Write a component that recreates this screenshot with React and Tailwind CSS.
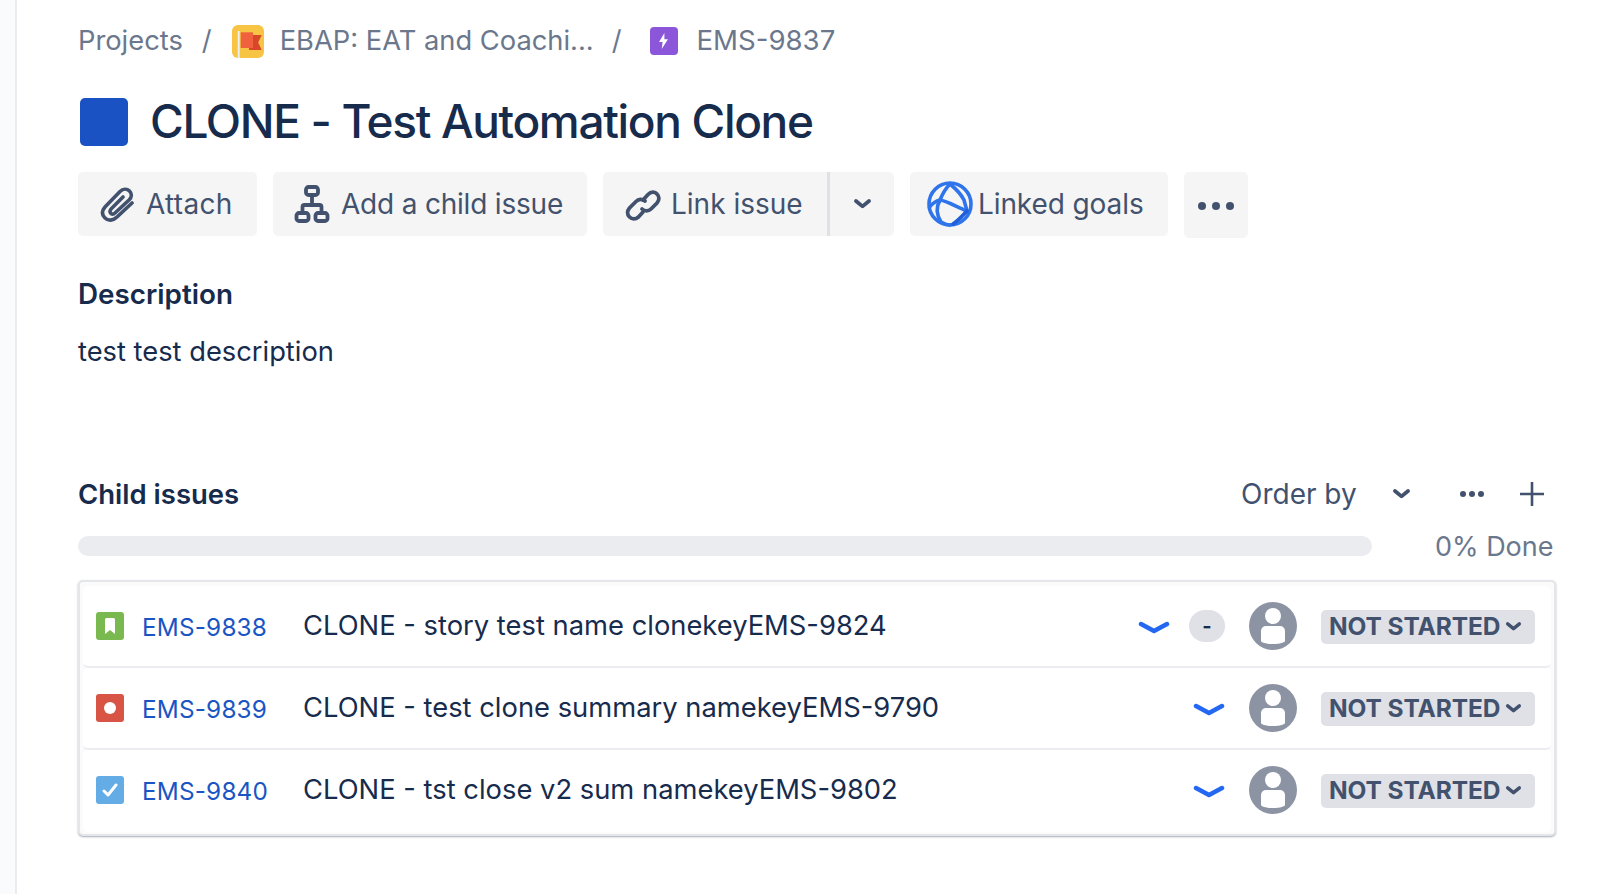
import React from 'react'

const rows = [
  { key: 'EMS-9838', type: 'story', summary: 'CLONE - story test name clonekeyEMS-9824', points: true },
  { key: 'EMS-9839', type: 'bug', summary: 'CLONE - test clone summary namekeyEMS-9790' },
  { key: 'EMS-9840', type: 'task', summary: 'CLONE - tst close v2 sum namekeyEMS-9802' },
]

function Chevron({ className }) {
  return (
    <svg viewBox="0 0 16 10" className={className} fill="none" stroke="currentColor" strokeWidth="3.2" strokeLinecap="round" strokeLinejoin="round">
      <path d="M2.500 2.500L8 7l5.500-4.500" />
    </svg>
  )
}

function PriorityLow() {
  return (
    <svg viewBox="0 0 32 14" className="mt-[3px] h-[14px] w-[32px] shrink-0" fill="none" stroke="#2468f2" strokeWidth="4.500" strokeLinecap="round" strokeLinejoin="round">
      <path d="M3 3l13 7 13-7" />
    </svg>
  )
}

function PaperclipIcon() {
  return (
    <svg viewBox="0 0 36 40" className="h-[40px] w-[36px] text-[#42526e]" fill="none" stroke="currentColor" strokeWidth="3.600" strokeLinecap="round">
      <path d="M34 19L19 33C15 37 10 37 7 34C4 31 3.500 27 7 23L22 7.500C25 4.500 29 4.500 31.500 7C34 9.500 34 13 31 16L17 29C15.500 30.500 13.500 30.500 12.500 29C11.500 27.500 12 26 13.500 24.500L25 13" />
    </svg>
  )
}

function HierarchyIcon() {
  return (
    <svg viewBox="0 0 36 40" className="h-[40px] w-[36px] text-[#42526e]" fill="none" stroke="currentColor" strokeWidth="3.800">
      <rect x="12" y="3" width="12" height="8" rx="2.500" />
      <rect x="2.500" y="29" width="12" height="8" rx="2.500" />
      <rect x="21.500" y="29" width="12" height="8" rx="2.500" />
      <path d="M18 11v10M8.500 29v-6a2 2 0 0 1 2-2h15a2 2 0 0 1 2 2v6" />
    </svg>
  )
}

function LinkIcon() {
  return (
    <svg viewBox="0 0 36 36" className="h-[36px] w-[36px] overflow-visible text-[#42526e]" fill="none" stroke="currentColor" strokeWidth="3.800" strokeLinecap="round">
      <path d="M19 14L24 8.500C27 5.500 31 5.500 33 8C35.500 10.500 35.500 14 33 17L27 23C24.500 25.500 20.500 25.500 18 23" />
      <path d="M21 15C18 12.500 14.500 13 12 15.500L5.500 22C3 25 3 28.500 5.500 31C8 33.500 11.500 33.500 14.500 31L19 26" />
    </svg>
  )
}

function GlobeIcon() {
  return (
    <svg viewBox="0 0 46 46" className="h-[46px] w-[46px]" fill="none" stroke="#2f74ea" strokeWidth="3.600" strokeLinecap="round">
      <circle cx="23" cy="23" r="21" />
      <path d="M23 3C18 8 15 14 13 19C9 20 5 23 2.500 26" />
      <path d="M23 3C29 8 34 13 37 19C38 23 39 26 40 30" />
      <path d="M13 19C20 20 30 26 40 30" />
      <path d="M13 19C9 26 9 33 14 41C17 43 20 44 23 44" />
      <path d="M40 30C36 34 32 39 26 43" stroke="#1f5fd8" />
    </svg>
  )
}

function TypeIcon({ type }) {
  if (type === 'story') {
    return (
      <span className="flex h-[28px] w-[28px] shrink-0 items-center justify-center rounded-[3px] bg-[#7ab94f]">
        <svg viewBox="0 0 12 16" className="h-[16px] w-[12px]" fill="white">
          <path d="M1 1.500A1.500 1.500 0 0 1 2.500 0h7A1.500 1.500 0 0 1 11 1.500V16l-5-4-5 4z" />
        </svg>
      </span>
    )
  }
  if (type === 'bug') {
    return (
      <span className="flex h-[28px] w-[28px] shrink-0 items-center justify-center rounded-[3px] bg-[#d85444]">
        <span className="h-[12px] w-[12px] rounded-full bg-white" />
      </span>
    )
  }
  return (
    <span className="flex h-[28px] w-[28px] shrink-0 items-center justify-center rounded-[3px] bg-[#64ace6]">
      <svg viewBox="0 0 16 14" className="h-[14px] w-[16px]" fill="none" stroke="white" strokeWidth="3" strokeLinecap="round" strokeLinejoin="round">
        <path d="M2 8l4 4 8-10" />
      </svg>
    </span>
  )
}

function Avatar() {
  return (
    <svg viewBox="0 0 48 48" className="h-[48px] w-[48px] shrink-0">
      <circle cx="24" cy="24" r="24" fill="#8c93a3" />
      <circle cx="24" cy="14" r="8" fill="white" />
      <path d="M12 29a5 5 0 0 1 5-5h14a5 5 0 0 1 5 5v10c0 1.500-5 3-12 3s-12-1.500-12-3z" fill="white" />
    </svg>
  )
}

function ActionButton({ children, className }) {
  return (
    <div className={`flex h-[64px] shrink-0 items-center whitespace-nowrap rounded-[5px] bg-[#f5f5f5] text-[#42526e] ${className}`}>
      {children}
    </div>
  )
}

function ChildRow({ row, last }) {
  return (
    <div className={`flex h-[82px] items-center rounded-[5px] border-b-2 bg-white pl-[13px] pr-[16px] ${last ? 'border-transparent' : 'border-[#ebecf0]'}`}>
      <TypeIcon type={row.type} />
      <a className="ml-[18px] mt-[2px] w-[161px] shrink-0 text-[24.300px] tracking-[0.2px] text-[#1a55c4]">{row.key}</a>
      <span className="text-[27.350px] text-[#172b4d]">{row.summary}</span>
      <div className="ml-auto flex items-center">
        <PriorityLow />
        {row.points && (
          <span className="ml-[19px] flex h-[32px] w-[36px] items-center justify-center rounded-full bg-[#dfe1e6] text-[20px] font-bold text-[#172b4d]">-</span>
        )}
        <div className="ml-[24px]">
          <Avatar />
        </div>
        <div className="ml-[24px] mt-[1px] flex h-[34px] w-[214px] items-center rounded-[5px] bg-[#dfe1e6] pl-[8px] text-[#42526e]">
          <span className="text-[24.500px] font-bold tracking-[-0.1px]">NOT STARTED</span>
          <Chevron className="ml-[5px] h-[11px] w-[17px]" />
        </div>
      </div>
    </div>
  )
}

export default function App() {
  return (
    <div className="flex min-h-[894px] bg-white font-['Inter',sans-serif]">
      <div className="w-[17px] shrink-0 border-r-2 border-[#ebecf0] bg-[#fafbfc]" />
      <div className="w-[1478px] pl-[61px]">
        <div className="mt-[21px] flex h-[40px] items-center whitespace-nowrap text-[27.300px] text-[#6b778c]">
          <span>Projects</span>
          <span className="ml-[19px]">/</span>
          <span className="ml-[20px] flex h-[33px] w-[32px] items-center justify-center rounded-[6px] bg-[#f7c444]">
            <svg viewBox="0 0 32 33" className="h-[33px] w-[32px]">
              <path d="M6.700 6v27" stroke="#e6f0f5" strokeWidth="2" />
              <path d="M21 10h8.700l-3.500 7.500 3.500 7.500H17v-2h4z" fill="#d9472b" />
              <path d="M8.700 7.300H21V23H8.700z" fill="#f0623e" />
            </svg>
          </span>
          <span className="ml-[16px]">EBAP: EAT and Coachi...</span>
          <span className="ml-[18px]">/</span>
          <span className="ml-[28px] flex h-[28px] w-[28px] items-center justify-center rounded-[4px] bg-[#8b56d9]">
            <svg viewBox="0 0 12 18" className="h-[16px] w-[11px]" fill="white">
              <path d="M7 0L1 10h4l-1 8 7-11H7z" />
            </svg>
          </span>
          <span className="ml-[19px] text-[27.600px]">EMS-9837</span>
        </div>

        <div className="mt-[37px] flex h-[48px] items-center pl-[2px]">
          <span className="h-[48px] w-[48px] shrink-0 rounded-[5px] bg-[#1a52c4]" />
          <h1 className="-mt-[2px] ml-[22px] whitespace-nowrap text-[46px] font-[550] tracking-[-1.33px] text-[#172b4d]">CLONE - Test Automation Clone</h1>
        </div>

        <div className="mt-[26px] flex items-start text-[28px]">
          <ActionButton className="w-[179px] pl-[20px]">
            <PaperclipIcon />
            <span className="ml-[12px] tracking-[0.3px]">Attach</span>
          </ActionButton>
          <ActionButton className="ml-[16px] w-[314px] pl-[21px]">
            <HierarchyIcon />
            <span className="ml-[11px] tracking-[-0.2px]">Add a child issue</span>
          </ActionButton>
          <ActionButton className="ml-[16px] w-[291px]">
            <div className="flex h-full w-[227px] items-center border-r-[3px] border-[#dfe1e6] pl-[21px]">
              <LinkIcon />
              <span className="ml-[11px]">Link issue</span>
            </div>
            <Chevron className="ml-[23px] h-[12px] w-[19px]" />
          </ActionButton>
          <ActionButton className="ml-[16px] w-[258px] pl-[17px]">
            <GlobeIcon />
            <span className="ml-[5px] tracking-[-0.1px]">Linked goals</span>
          </ActionButton>
          <div className="ml-[16px] flex h-[66px] w-[64px] items-center justify-center gap-[6px] rounded-[5px] bg-[#f5f5f5] pt-[1px]">
            <span className="h-[8px] w-[8px] rounded-full bg-[#42526e]" />
            <span className="h-[8px] w-[8px] rounded-full bg-[#42526e]" />
            <span className="h-[8px] w-[8px] rounded-full bg-[#42526e]" />
          </div>
        </div>

        <h2 className="mt-[38px] text-[27.800px] leading-[36px] font-semibold text-[#172b4d]">Description</h2>
        <p className="mt-[22px] text-[27.300px] leading-[36px] text-[#172b4d]">test test description</p>

        <div className="mt-[106px] flex h-[36px] items-center whitespace-nowrap">
          <h2 className="mt-[2px] w-[1163px] shrink-0 text-[27.500px] font-semibold text-[#172b4d]">Child issues</h2>
          <span className="text-[28px] text-[#42526e]">Order by</span>
          <Chevron className="ml-[35px] h-[12px] w-[19px] shrink-0 text-[#42526e]" />
          <div className="ml-[49px] flex shrink-0 gap-[3px]">
            <span className="h-[6px] w-[6px] rounded-full bg-[#42526e]" />
            <span className="h-[6px] w-[6px] rounded-full bg-[#42526e]" />
            <span className="h-[6px] w-[6px] rounded-full bg-[#42526e]" />
          </div>
          <svg viewBox="0 0 24 24" className="ml-[36px] h-[24px] w-[24px] shrink-0" fill="none" stroke="#42526e" strokeWidth="2.600">
            <path d="M12 0v24M0 12h24" />
          </svg>
        </div>

        <div className="mt-[18px] flex h-[32px] items-center whitespace-nowrap">
          <div className="h-[20px] w-[1294px] shrink-0 rounded-full bg-[#ebecf0]" />
          <span className="ml-[63px] mt-[2px] text-[27px] text-[#6b778c]">0% Done</span>
        </div>

        <div className="mt-[18px] w-[1478px] rounded-[5px] border-2 border-[#e4e6ea] bg-[#fbfbfc] px-[3px] pb-[2px] pt-[4px] shadow-[0_1px_2px_#a5adba]">
          {rows.map((row, i) => (
            <ChildRow key={row.key} row={row} last={i === rows.length - 1} />
          ))}
        </div>
      </div>
    </div>
  )
}
